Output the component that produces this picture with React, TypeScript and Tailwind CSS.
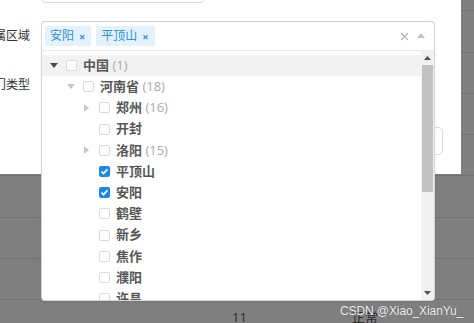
type Node = { name: string; count?: number; level: number; caret?: "open" | "closed"; dark?: boolean; checked?: boolean };

const nodes: Node[] = [
  { name: "中国", count: 1, level: 0, caret: "open", dark: true },
  { name: "河南省", count: 18, level: 1, caret: "open" },
  { name: "郑州", count: 16, level: 2, caret: "closed" },
  { name: "开封", level: 2 },
  { name: "洛阳", count: 15, level: 2, caret: "closed" },
  { name: "平顶山", level: 2, checked: true },
  { name: "安阳", level: 2, checked: true },
  { name: "鹤壁", level: 2 },
  { name: "新乡", level: 2 },
  { name: "焦作", level: 2 },
  { name: "濮阳", level: 2 },
  { name: "许昌", level: 2 },
];

const indent = ["pl-[5px]", "pl-[22px]", "pl-[38px]"];

function Caret({ kind, dark }: { kind?: "open" | "closed"; dark?: boolean }) {
  const color = dark ? "#4a4a4a" : "#c8c8c8";
  return (
    <span className="w-[13px] h-[13px] flex items-center justify-center shrink-0">
      {kind === "open" && (
        <svg width="8" height="5" viewBox="0 0 8 5">
          <polygon points="0,0 8,0 4,5" fill={color} />
        </svg>
      )}
      {kind === "closed" && (
        <svg width="5" height="8" viewBox="0 0 5 8">
          <polygon points="0,0 5,4 0,8" fill={color} />
        </svg>
      )}
    </span>
  );
}

function Checkbox({ checked }: { checked?: boolean }) {
  return checked ? (
    <span className="ml-[6px] block w-[11px] h-[11px] rounded-[2px] bg-[#1e88e5] flex items-center justify-center shrink-0">
      <svg width="9" height="9" viewBox="0 0 9 9">
        <polyline points="1.5,4.6 3.6,6.6 7.5,2.3" fill="none" stroke="#fff" strokeWidth="1.7" />
      </svg>
    </span>
  ) : (
    <span className="ml-[6px] block w-[11px] h-[11px] rounded-[2px] border border-[#dcdcdc] bg-white shrink-0" />
  );
}

function Tag({ label }: { label: string }) {
  return (
    <span className="h-[20px] flex items-center gap-[5px] pl-[5px] pr-[6px] bg-[#e3f2fd] text-[#2f8fd8] text-[12px] rounded-[2px]">
      {label}
      <span className="text-[11px] font-bold leading-none">×</span>
    </span>
  );
}

export default function App() {
  return (
    <div className="relative w-[474px] h-[323px] overflow-hidden bg-[#7f7f7f] font-[family-name:'Open_Sans','Noto_Sans_CJK_SC',sans-serif]">
      {/* table behind the overlay */}
      <div className="flex flex-col -mt-[30px]">
        {Array.from({ length: 8 }).map((_, i) => (
          <div key={i} className="h-[41.3px] border-b border-[#717171] shrink-0" />
        ))}
        <div className="h-[41px] flex items-center -mt-[3px] text-[13px] text-[#2b2b2b]">
          <span className="ml-[232px]">11</span>
          <span className="ml-[105px]">正常</span>
        </div>
      </div>

      {/* dialog */}
      <div className="absolute left-0 top-0 w-[461px] h-[174px] bg-white">
        <div className="flex flex-col -mt-[28px]">
          <div className="flex gap-[11px]">
            <div className="w-[30px]" />
            <div className="w-[163px] h-[31px] border border-[#dcdcdc] rounded-[4px]" />
          </div>

          <div className="flex gap-[11px] mt-[18px] items-start">
            <div className="w-[30px] h-[30px] flex items-center justify-end whitespace-nowrap text-[12px] text-[#333]">所属区域</div>
            <div className="relative w-[394px] z-10">
              <div className="h-[30px] border border-[#d4d4d4] border-b-[#ececec] rounded-t-[4px] bg-white flex items-center pl-[3px] pr-[8px]">
                <div className="flex gap-[5px] flex-1">
                  <Tag label="安阳" />
                  <Tag label="平顶山" />
                </div>
                <svg width="9" height="9" viewBox="0 0 9 9" className="mr-[8px]">
                  <path d="M1 1 L8 8 M8 1 L1 8" stroke="#b5b5b5" strokeWidth="1.2" />
                </svg>
                <svg width="8" height="5" viewBox="0 0 8 5" className="mr-[1px] mb-[1px]">
                  <polygon points="0,5 8,5 4,0" fill="#c4c4c4" />
                </svg>
              </div>
              <div className="absolute left-0 right-0 top-full h-[250px] border border-t-0 border-[#d4d4d4] rounded-b-[4px] bg-white flex shadow-[0_1px_2px_rgba(0,0,0,0.08)]">
                <div className="flex-1 pt-[4px] overflow-hidden">
                  {nodes.map((n, i) => (
                    <div
                      key={n.name}
                      className={`h-[21.2px] flex items-center ${indent[n.level]} ${i === 0 ? "bg-[#f2f2f2]" : ""}`}
                    >
                      <Caret kind={n.caret} dark={n.dark} />
                      <Checkbox checked={n.checked} />
                      <span className="ml-[6px] text-[13px] whitespace-nowrap">
                        <span className="font-semibold text-[#575757]">{n.name}</span>
                        {n.count !== undefined && <span className="text-[#aaa]"> ({n.count})</span>}
                      </span>
                    </div>
                  ))}
                </div>
                <div className="w-[13px] bg-[#f1f1f1] flex flex-col items-center">
                  <div className="h-[14px] flex items-center justify-center">
                    <svg width="7" height="4" viewBox="0 0 7 4">
                      <polygon points="0,4 7,4 3.5,0" fill="#505050" />
                    </svg>
                  </div>
                  <div className="w-[11px] h-[127px] bg-[#c1c1c1]" />
                  <div className="flex-1" />
                  <div className="h-[14px] flex items-center justify-center">
                    <svg width="7" height="4" viewBox="0 0 7 4">
                      <polygon points="0,0 7,0 3.5,4" fill="#505050" />
                    </svg>
                  </div>
                </div>
              </div>
            </div>
          </div>

          <div className="flex gap-[11px] mt-[19px]">
            <div className="w-[30px] h-[30px] flex items-center justify-end whitespace-nowrap text-[12px] text-[#333]">部门类型</div>
            <div className="w-[394px] h-[30px] border border-[#dcdcdc] rounded-[4px]" />
          </div>

          <div className="flex justify-end pr-[18px] mt-[27px]">
            <div className="w-[60px] h-[28px] border border-[#dcdcdc] rounded-[4px]" />
          </div>
        </div>
      </div>

      {/* watermark */}
      <div className="absolute left-[340px] top-[302px] text-[12px] tracking-[-0.1px] text-[#f0f0f0] font-[family-name:'Liberation_Sans',sans-serif] [text-shadow:0_0_1px_rgba(0,0,0,0.35)] whitespace-nowrap">
        CSDN @Xiao_XianYu_
      </div>
    </div>
  );
}
